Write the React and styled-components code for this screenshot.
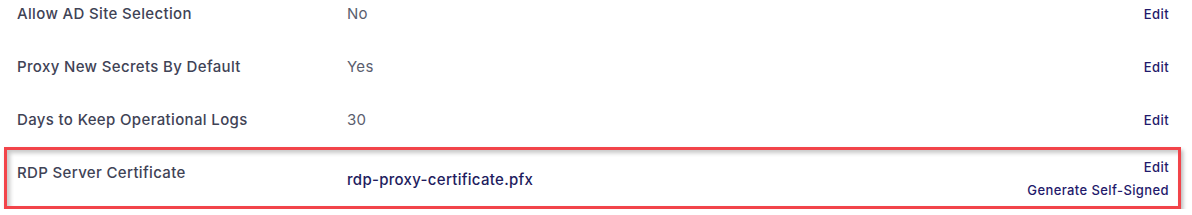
import styled, { createGlobalStyle } from 'styled-components';

const GlobalStyle = createGlobalStyle`
    html, body {
        margin: 0;
        padding: 0;
        background: #fff;
        font-family: Inter, "Noto Sans", sans-serif;
    }
    * {
        box-sizing: border-box;
    }
`;

const List = styled.ul`
    list-style: none;
    margin: -11px 0 0 0;
    padding: 0 11px 0 4px;
`;

const Row = styled.li`
    display: grid;
    grid-template-columns: 330px 1fr auto;
    align-items: start;
    height: ${(p) => (p.$highlight ? '62px' : '53px')};
    margin-top: ${(p) => (p.$highlight ? '-1px' : '0')};
    padding: 0 9px 0 10px;
    border: 3px solid ${(p) => (p.$highlight ? '#f2444a' : 'transparent')};
    box-shadow: ${(p) =>
        p.$highlight
            ? '2px 3px 4px rgba(0,0,0,0.28), inset 3px 3px 4px rgba(0,0,0,0.22)'
            : 'none'};
    .label {
        padding-top: ${(p) => (p.$highlight ? '13px' : '12px')};
        font-size: 15px;
        line-height: 20px;
        font-weight: 500;
        letter-spacing: 0.35px;
        color: #3f4356;
    }
    .value {
        padding-top: 12px;
        font-size: 15px;
        line-height: 20px;
        letter-spacing: 0.3px;
        color: #5a5e6e;
    }
    .file {
        padding-top: 20px;
        font-size: 15px;
        line-height: 20px;
        font-weight: 500;
        letter-spacing: 0.3px;
        color: #221c5e;
    }
`;

const Actions = styled.div`
    display: flex;
    flex-direction: column;
    align-items: flex-end;
    gap: 5px;
    padding-top: ${(p) => (p.$tight ? '8px' : '13px')};
    a {
        font-size: 13px;
        line-height: 18px;
        font-weight: 500;
        letter-spacing: 0.4px;
        color: #1f1a6b;
        text-decoration: none;
        cursor: pointer;
    }
`;

const settings = [
    { label: 'Allow AD Site Selection', value: 'No' },
    { label: 'Proxy New Secrets By Default', value: 'Yes' },
    { label: 'Days to Keep Operational Logs', value: '30' },
];

const App = () => {
    return (
        <>
            <GlobalStyle />
            <List>
                {settings.map((s) => (
                    <Row key={s.label}>
                        <span className='label'>{s.label}</span>
                        <span className='value'>{s.value}</span>
                        <Actions>
                            <a>Edit</a>
                        </Actions>
                    </Row>
                ))}
                <Row $highlight>
                    <span className='label'>RDP Server Certificate</span>
                    <span className='file'>rdp-proxy-certificate.pfx</span>
                    <Actions $tight>
                        <a>Edit</a>
                        <a>Generate Self-Signed</a>
                    </Actions>
                </Row>
            </List>
        </>
    );
};

export default App;
